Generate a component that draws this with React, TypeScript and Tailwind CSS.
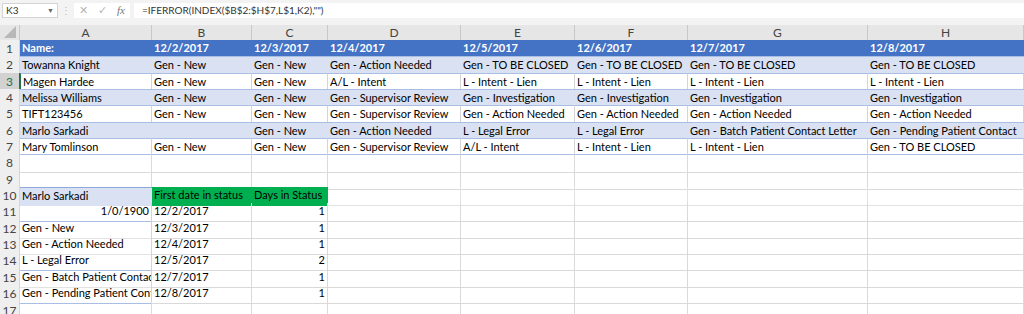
import React from "react";

const cols = "grid grid-cols-[20px_132px_100px_76px_133px_114px_113px_180px_1fr]";
const font = "font-['Lato','Liberation_Sans',sans-serif]";

type Cell = { t?: string; right?: boolean };

const tableRows: string[][] = [
    ["Towanna Knight", "Gen - New", "Gen - New", "Gen - Action Needed", "Gen - TO BE CLOSED", "Gen - TO BE CLOSED", "Gen - TO BE CLOSED", "Gen - TO BE CLOSED"],
    ["Magen Hardee", "Gen - New", "Gen - New", "A/L - Intent", "L - Intent - Lien", "L - Intent - Lien", "L - Intent - Lien", "L - Intent - Lien"],
    ["Melissa Williams", "Gen - New", "Gen - New", "Gen - Supervisor Review", "Gen - Investigation", "Gen - Investigation", "Gen - Investigation", "Gen - Investigation"],
    ["TIFT123456", "Gen - New", "Gen - New", "Gen - Supervisor Review", "Gen - Action Needed", "Gen - Action Needed", "Gen - Action Needed", "Gen - Action Needed"],
    ["Marlo Sarkadi", "", "Gen - New", "Gen - Action Needed", "L - Legal Error", "L - Legal Error", "Gen - Batch Patient Contact Letter", "Gen - Pending Patient Contact"],
    ["Mary Tomlinson", "Gen - New", "Gen - New", "Gen - Supervisor Review", "A/L - Intent", "L - Intent - Lien", "L - Intent - Lien", "Gen - TO BE CLOSED"],
];

const lower: { n: number; a: string; aRight?: boolean; b: string; c: string }[] = [
    { n: 11, a: "1/0/1900", aRight: true, b: "12/2/2017", c: "1" },
    { n: 12, a: "Gen - New", b: "12/3/2017", c: "1" },
    { n: 13, a: "Gen - Action Needed", b: "12/4/2017", c: "1" },
    { n: 14, a: "L - Legal Error", b: "12/5/2017", c: "2" },
    { n: 15, a: "Gen - Batch Patient Contact Letter", b: "12/7/2017", c: "1" },
    { n: 16, a: "Gen - Pending Patient Contact Letter", b: "12/8/2017", c: "1" },
];

function RowNum({ n, active }: { n: number; active?: boolean }) {
    return (
        <div
            className={`flex items-center justify-center border-b border-r text-[12px] ${
                active
                    ? "bg-[#d2d2d2] text-[#217346] border-r-[#217346] border-b-[#c6c6c6]"
                    : "bg-[#efefef] text-[#444] border-[#d6d6d6]"
            }`}
        >
            {n}
        </div>
    );
}

function Txt({ t, right, className = "" }: Cell & { className?: string }) {
    return (
        <div className={`overflow-hidden whitespace-nowrap px-[2px] leading-[16px] ${right ? "text-right" : ""} ${className}`}>
            {t}
        </div>
    );
}

export default function App() {
    return (
        <div className={`w-[1024px] h-[314px] overflow-hidden bg-white text-black ${font}`}>
            {/* formula bar */}
            <div className="h-[25px] bg-[#f3f3f3] pt-[3px]">
                <div className="flex h-[15px] items-stretch">
                    <div className="ml-[2px] flex w-[56px] items-center justify-between border border-[#d4d4d4] bg-white pl-[3px] pr-[3px] text-[10px] text-[#333]">
                        <span>K3</span>
                        <span className="text-[7px] text-[#666]">▼</span>
                    </div>
                    <div className="flex w-[16px] items-center justify-center text-[10px] text-[#bbb]">⋮</div>
                    <div className="flex w-[56px] items-center justify-around bg-white text-[11px] text-[#b5b5b5]">
                        <span>✕</span>
                        <span>✓</span>
                        <span className="font-['Liberation_Serif',serif] italic text-[#777]">fx</span>
                    </div>
                    <div className="ml-[4px] flex flex-1 items-center bg-white pl-[8px] text-[10px] text-[#333]">
                        =IFERROR(INDEX($B$2:$H$7,L$1,K2),"")
                    </div>
                </div>
            </div>

            {/* column headers */}
            <div className={`${cols} h-[15px] bg-[#e6e6e6] text-[12px] text-[#444]`}>
                <div className="relative border-r border-[#c8c8c8]">
                    <div className="absolute bottom-[2px] right-[3px] h-0 w-0 border-b-[12px] border-l-[12px] border-b-[#b8b8b8] border-l-transparent" />
                </div>
                {["A", "B", "C", "D", "E", "F", "G", "H"].map((c) => (
                    <div key={c} className="flex items-center justify-center border-r border-[#c8c8c8] leading-none">
                        {c}
                    </div>
                ))}
            </div>

            {/* table header row 1 */}
            <div className={`${cols} h-[16.35px] text-[11px]`}>
                <RowNum n={1} />
                <div className="col-span-8 grid grid-cols-[132px_100px_76px_133px_114px_113px_180px_1fr] bg-[#4472c4] font-bold text-white">
                    {["Name:", "12/2/2017", "12/3/2017", "12/4/2017", "12/5/2017", "12/6/2017", "12/7/2017", "12/8/2017"].map((t) => (
                        <Txt key={t} t={t} />
                    ))}
                </div>
            </div>

            {/* table body rows 2-7 */}
            {tableRows.map((r, i) => {
                const band = i % 2 === 0;
                return (
                    <div key={i} className={`${cols} h-[16.35px] text-[11px]`}>
                        <RowNum n={i + 2} active={i === 1} />
                        {r.map((t, j) => (
                            <Txt
                                key={j}
                                t={t}
                                className={`border-t border-t-[#a9bee3] ${
                                    band ? "bg-[#d9e1f2]" : `bg-white border-r border-r-[#d4d4d4] ${i === 1 && j === 0 ? "border-l border-l-[#217346]" : ""}`
                                }`}
                            />
                        ))}
                    </div>
                );
            })}

            {/* rows 8-9 */}
            {[8, 9].map((n) => (
                <div key={n} className={`${cols} h-[16.35px] text-[11px]`}>
                    <RowNum n={n} />
                    {Array.from({ length: 8 }).map((_, j) => (
                        <div key={j} className={`border-r border-b border-[#dadada] ${n === 8 ? "border-t border-t-[#a9bee3]" : ""}`} />
                    ))}
                </div>
            ))}

            {/* row 10 */}
            <div className={`${cols} h-[16.35px] text-[11px]`}>
                <RowNum n={10} />
                <Txt t="Marlo Sarkadi" className="bg-[#d9e1f2] border-t border-t-[#8ea9db]" />
                <Txt t="First date in status" className="bg-[#00b050]" />
                <Txt t="Days in Status" className="bg-[#00b050]" />
                {Array.from({ length: 5 }).map((_, j) => (
                    <div key={j} className="border-r border-b border-[#e2e2e2]" />
                ))}
            </div>

            {/* rows 11-16 */}
            {lower.map((r) => (
                <div key={r.n} className={`${cols} h-[16.35px] text-[11px]`}>
                    <RowNum n={r.n} />
                    <Txt
                        t={r.a}
                        right={r.aRight}
                        className={`border-r border-r-[#d4d4d4] border-b ${
                            r.n === 11 || r.n === 14 || r.n === 16 ? "border-b-[#a9bee3]" : "border-b-[#e2e2e2]"
                        }`}
                    />
                    <Txt t={r.b} className="border-r border-b border-[#d9d9d9]" />
                    <Txt t={r.c} right className="border-r border-b border-[#d9d9d9]" />
                    {Array.from({ length: 5 }).map((_, j) => (
                        <div key={j} className="border-r border-b border-[#d9d9d9]" />
                    ))}
                </div>
            ))}

            {/* row 17 */}
            <div className={`${cols} h-[16.35px] text-[11px]`}>
                <RowNum n={17} />
                {Array.from({ length: 8 }).map((_, j) => (
                    <div key={j} className="border-r border-[#dadada]" />
                ))}
            </div>
        </div>
    );
}
